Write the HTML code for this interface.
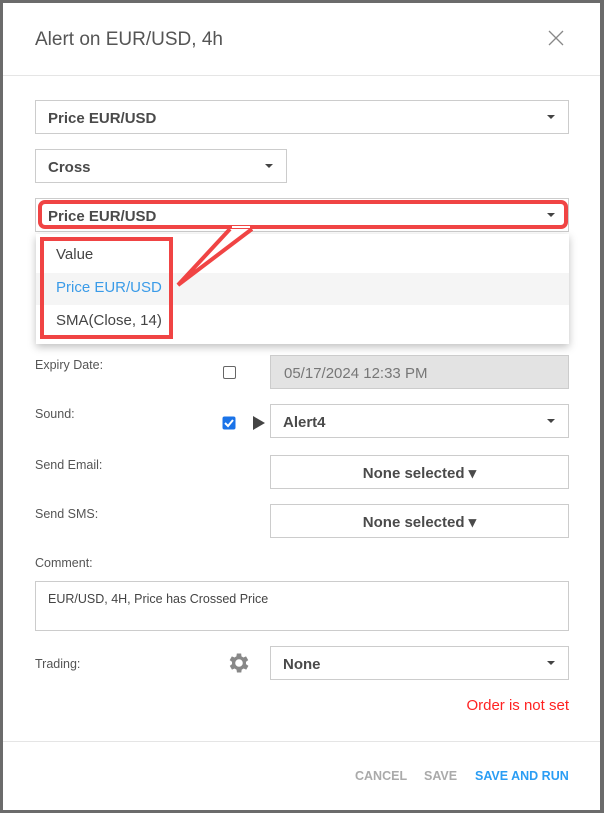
<!DOCTYPE html>
<html><head><meta charset="utf-8"><style>
body{margin:0;width:604px;height:813px;background:#6b6b6b;position:relative;overflow:hidden;font-family:"Liberation Sans",sans-serif;}
.dlg{position:absolute;left:3px;top:3px;width:597px;height:807px;background:#fff;}
.a{position:absolute;}
.sel{position:absolute;border:1px solid #ccc;box-sizing:border-box;background:#fff;font-size:15px;font-weight:bold;color:#4a4a4a;padding-left:12px;}
.car{position:absolute;right:13px;top:14px;width:0;height:0;border-left:4px solid transparent;border-right:4px solid transparent;border-top:4px solid #444;}
.lbl{position:absolute;left:35px;font-size:12.5px;color:#555;}
.btn{position:absolute;left:270px;width:299px;height:34px;border:1px solid #ccc;box-sizing:border-box;text-align:center;font-size:15px;font-weight:bold;color:#4a4a4a;line-height:35px;}
</style></head><body>
<div class="dlg"></div>
<div class="a" style="left:35px;top:29px;font-size:19px;color:#555;">Alert on EUR/USD, 4h</div>
<svg class="a" style="left:548px;top:30px" width="16" height="16"><path d="M1 1L15 15M15 1L1 15" stroke="#888" stroke-width="1.3"/></svg>
<div class="a" style="left:3px;top:75px;width:597px;height:1px;background:#e5e5e5"></div>

<div class="sel" style="left:35px;top:100px;width:534px;height:34px;line-height:35px">Price EUR/USD<div class="car"></div></div>
<div class="sel" style="left:35px;top:149px;width:252px;height:34px;line-height:35px">Cross<div class="car"></div></div>
<div class="sel" style="left:35px;top:198px;width:534px;height:34px;line-height:35px">Price EUR/USD<div class="car"></div></div>

<div class="a" style="left:270px;top:305px;width:299px;height:36px;border:1px solid #ccc;box-sizing:border-box"></div>
<div class="a" style="left:36px;top:234px;width:533px;height:110px;background:#fff;box-shadow:0 3px 8px rgba(0,0,0,.25);font-size:15px;color:#444">
<div style="position:absolute;left:20px;top:12px">Value</div>
<div style="position:absolute;left:0;top:39px;width:533px;height:32px;background:#f5f5f5"></div>
<div style="position:absolute;left:20px;top:45px;color:#3a9be8">Price EUR/USD</div>
<div style="position:absolute;left:20px;top:78px">SMA(Close, 14)</div>
</div>

<svg class="a" style="left:0;top:0" width="604" height="400">
<rect x="40" y="202" width="526" height="25" rx="5" fill="none" stroke="#f04444" stroke-width="4"/>
<rect x="42" y="239" width="129" height="98" fill="none" stroke="#f04444" stroke-width="4"/>
<path d="M230 229L178 285L252 229" fill="#fff" stroke="#f04444" stroke-width="4" stroke-linejoin="miter"/>
<path d="M232 227L250 227" stroke="#fff" stroke-width="2"/>
</svg>

<div class="lbl" style="top:358px">Expiry Date:</div>
<div class="a" style="left:223px;top:366px;width:11px;height:11px;border:1px solid #666;border-radius:2px"></div>
<div class="a" style="left:270px;top:355px;width:299px;height:34px;background:#e3e3e3;border:1px solid #ccc;box-sizing:border-box;font-size:15px;color:#777;line-height:35px;padding-left:13px">05/17/2024 12:33 PM</div>

<div class="lbl" style="top:407px">Sound:</div>
<svg class="a" style="left:222px;top:416px" width="14" height="14"><rect x="0.5" y="0.5" width="13" height="13" rx="2" fill="#1a73e8"/><path d="M3 7L6 10L11 4" stroke="#fff" stroke-width="2" fill="none"/></svg>
<svg class="a" style="left:252px;top:415px" width="14" height="16"><path d="M1 1L13 8L1 15Z" fill="#444"/></svg>
<div class="sel" style="left:270px;top:404px;width:299px;height:34px;line-height:35px">Alert4<div class="car"></div></div>

<div class="lbl" style="top:458px">Send Email:</div>
<div class="btn" style="top:455px">None selected ▾</div>
<div class="lbl" style="top:507px">Send SMS:</div>
<div class="btn" style="top:504px">None selected ▾</div>

<div class="lbl" style="top:556px">Comment:</div>
<div class="a" style="left:35px;top:581px;width:534px;height:50px;border:1px solid #ccc;box-sizing:border-box;font-size:12.5px;color:#444;padding:10px 12px">EUR/USD, 4H, Price has Crossed Price</div>

<div class="lbl" style="top:657px">Trading:</div>
<svg class="a" style="left:226px;top:650px" width="26" height="26" viewBox="0 0 24 24"><path fill="#888" d="M19.4 13a7.5 7.5 0 000-2l2.1-1.6-2-3.5-2.5 1a7 7 0 00-1.7-1L15 3.2h-4l-.4 2.7a7 7 0 00-1.7 1l-2.5-1-2 3.5L6.6 11a7.5 7.5 0 000 2l-2.1 1.6 2 3.5 2.5-1a7 7 0 001.7 1l.4 2.7h4l.4-2.7a7 7 0 001.7-1l2.5 1 2-3.5zM13 15.5a3.5 3.5 0 110-7 3.5 3.5 0 010 7z" transform="translate(-1 0)"/></svg>
<div class="sel" style="left:270px;top:646px;width:299px;height:34px;line-height:35px">None<div class="car"></div></div>

<div class="a" style="right:35px;top:697px;font-size:15px;color:#f22">Order is not set</div>
<div class="a" style="left:3px;top:741px;width:597px;height:1px;background:#e5e5e5"></div>
<div class="a" style="left:355px;top:769px;font-size:12.5px;font-weight:bold;color:#aaa">CANCEL</div>
<div class="a" style="left:424px;top:769px;font-size:12.5px;font-weight:bold;color:#aaa">SAVE</div>
<div class="a" style="left:475px;top:769px;font-size:12.5px;font-weight:bold;color:#2a9df4">SAVE AND RUN</div>
</body></html>
